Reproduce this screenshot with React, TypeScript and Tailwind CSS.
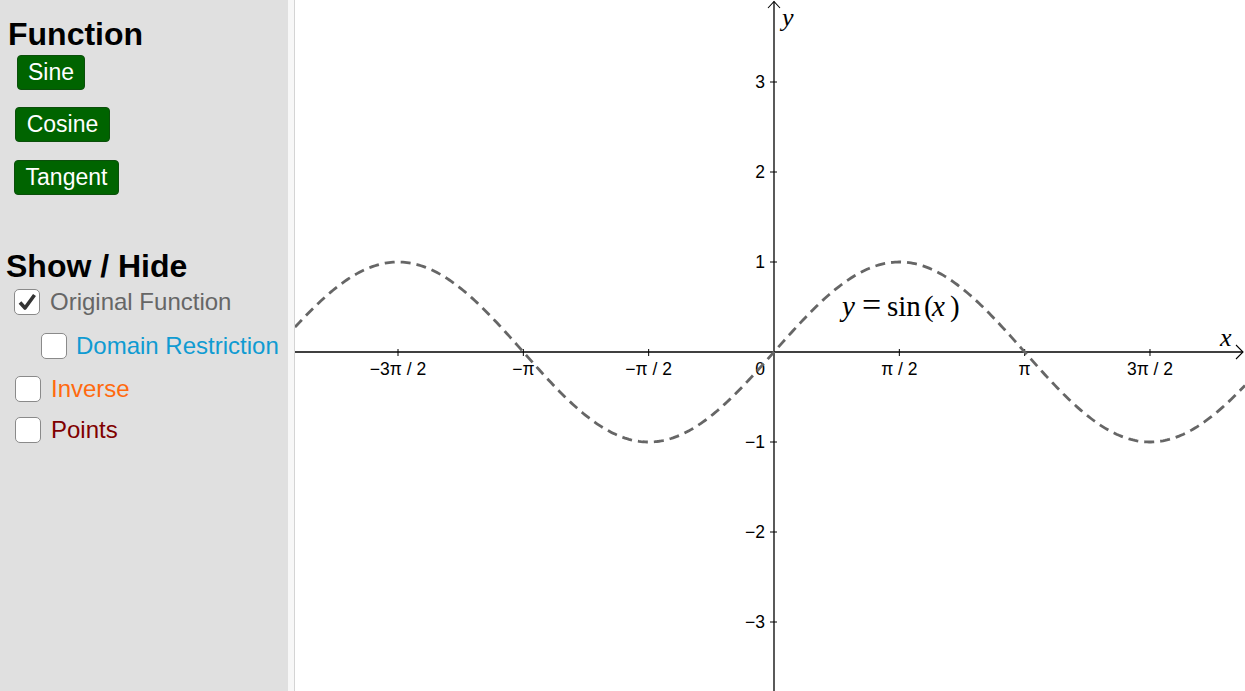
import React from "react";

const OX = 479;
const OY = 352;
const HALF_PI = 125.33;
const UNIT_Y = 90;

const buttons = [
  { label: "Sine", cls: "mt-[5px] ml-[17px] w-[68px]" },
  { label: "Cosine", cls: "mt-[17px] ml-[15px] w-[95px]" },
  { label: "Tangent", cls: "mt-[18px] ml-[14px] w-[105px]" },
];

const toggles = [
  { label: "Original Function", checked: true, color: "text-[#666666]", cls: "mt-[7px] ml-[14px] gap-[10px]" },
  { label: "Domain Restriction", checked: false, color: "text-[#0f9bd2]", cls: "mt-[18px] ml-[41px] gap-[9px]" },
  { label: "Inverse", checked: false, color: "text-[#ff6a0f]", cls: "mt-[17px] ml-[15px] gap-[10px]" },
  { label: "Points", checked: false, color: "text-[#800000]", cls: "mt-[15px] ml-[15px] gap-[10px]" },
];

const xTicks = [
  { k: -3, label: "−3π / 2" },
  { k: -2, label: "−π" },
  { k: -1, label: "−π / 2" },
  { k: 1, label: "π / 2" },
  { k: 2, label: "π" },
  { k: 3, label: "3π / 2" },
];

const yTicks = [3, 2, 1, -1, -2, -3];

const serif = { fontFamily: "'Liberation Serif', 'Times New Roman', serif" };

function sinePath(width: number) {
  const unit = HALF_PI / (Math.PI / 2);
  const pts: string[] = [];
  for (let px = 0; px <= width; px += 2) {
    const x = (px - OX) / unit;
    const y = OY - UNIT_Y * Math.sin(x);
    pts.push(`${px === 0 ? "M" : "L"}${px.toFixed(1)} ${y.toFixed(2)}`);
  }
  return pts.join(" ");
}

function Checkbox({ checked }: { checked: boolean }) {
  return (
    <div className="flex h-[26px] w-[26px] shrink-0 items-center justify-center rounded-[5px] border border-[#8a8a8a] bg-white">
      {checked && (
        <svg width="22" height="22" viewBox="0 0 22 22">
          <path d="M4 11.5 L9 17 L18.5 4" fill="none" stroke="#333" strokeWidth="3.6" strokeLinejoin="round" />
        </svg>
      )}
    </div>
  );
}

function Graph() {
  const w = 950;
  const h = 691;
  return (
    <svg width={w} height={h} className="block" style={{ fontFamily: "'Liberation Sans', Arial, sans-serif" }}>
      {/* axes */}
      <line x1={0} y1={OY} x2={w - 2} y2={OY} stroke="#000" strokeWidth="1.3" />
      <polyline points={`${w - 9},${OY - 7} ${w - 2},${OY} ${w - 9},${OY + 7}`} fill="none" stroke="#000" strokeWidth="1.1" />
      <line x1={OX} y1={h} x2={OX} y2={1.5} stroke="#000" strokeWidth="1.3" />
      <polyline points={`${OX - 6},8 ${OX},1.5 ${OX + 6},8`} fill="none" stroke="#000" strokeWidth="1.1" />

      {xTicks.map((t) => {
        const x = OX + t.k * HALF_PI;
        return (
          <g key={t.k}>
            <line x1={x} y1={OY - 3} x2={x} y2={OY + 4} stroke="#000" strokeWidth="1" />
            <text x={x} y={OY + 23} fontSize="17.5" textAnchor="middle" fill="#000">
              {t.label}
            </text>
          </g>
        );
      })}
      <text x={OX - 14} y={OY + 23} fontSize="17.5" textAnchor="middle" fill="#000">
        0
      </text>

      {yTicks.map((v) => {
        const y = OY - v * UNIT_Y;
        return (
          <g key={v}>
            <line x1={OX - 4} y1={y} x2={OX + 3} y2={y} stroke="#000" strokeWidth="1" />
            <text x={OX - 9} y={y + 6} fontSize="17.5" textAnchor="end" fill="#000">
              {v < 0 ? `−${-v}` : v}
            </text>
          </g>
        );
      })}

      {/* axis names */}
      <text x={OX + 8} y={26} fontSize="26" fontStyle="italic" fill="#000" style={serif}>
        y
      </text>
      <text x={w - 25} y={346} fontSize="26" fontStyle="italic" fill="#000" style={serif}>
        x
      </text>

      {/* curve */}
      <path d={sinePath(w)} fill="none" stroke="#666" strokeWidth="2.8" strokeDasharray="10 6" />

      {/* formula */}
      <text y={316} fontSize="29" fill="#000" style={serif}>
        <tspan x={547} fontStyle="italic">y</tspan>
        <tspan x={567} fontSize="34">=</tspan>
        <tspan x={592}>sin</tspan>
        <tspan x={629}>(</tspan>
        <tspan x={637} fontStyle="italic">x</tspan>
        <tspan x={655}>)</tspan>
      </text>
    </svg>
  );
}

export default function App() {
  return (
    <div className="flex h-[691px] w-[1245px] overflow-hidden bg-white font-['Liberation_Sans',Arial,sans-serif]">
      <div className="flex w-[288px] shrink-0 flex-col bg-[#e0e0e0]">
        <h2 className="mt-[18px] ml-[8px] text-[32px] font-bold leading-[32px] text-black">Function</h2>
        {buttons.map((b) => (
          <button
            key={b.label}
            className={`${b.cls} flex h-[35px] items-center justify-center rounded-[4px] border border-[#0b4f0b] bg-[#006400] text-[23px] leading-none text-white`}
          >
            {b.label}
          </button>
        ))}

        <h2 className="mt-[55px] ml-[6px] text-[32px] font-bold leading-[32px] text-black">Show / Hide</h2>
        {toggles.map((t) => (
          <label key={t.label} className={`${t.cls} flex h-[26px] items-center`}>
            <Checkbox checked={t.checked} />
            <span className={`${t.color} whitespace-nowrap text-[24px] leading-none`}>{t.label}</span>
          </label>
        ))}
      </div>
      <div className="w-[6px] shrink-0 bg-[#f7f7f7]" />
      <div className="flex-1 border-l border-[#d4d4d4]">
        <Graph />
      </div>
    </div>
  );
}
